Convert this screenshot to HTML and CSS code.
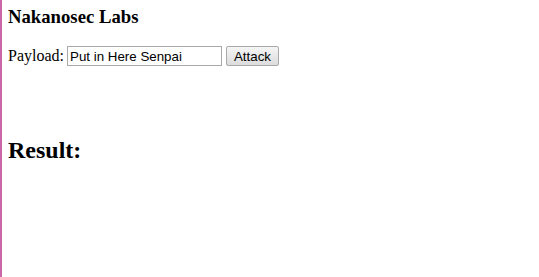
FILE: index.html
```html
<!DOCTYPE html>
<html>
<head>
<meta charset="utf-8">
<link rel="stylesheet" href="styles.css">
</head>
<body>
<h3 class="title">Nakanosec Labs</h3>
<form class="form">
  <label class="label">Payload:</label>
  <input class="field" type="text" value="Put in Here Senpai">
  <button class="btn" type="button">Attack</button>
</form>
<h2 class="result">Result:</h2>
</body>
</html>
```
FILE: styles.css
```css
html { border-left: 2px solid #cc66aa; min-height: 100%; }
body { margin: 6px 8px 8px 6px; font-family: "Liberation Serif", serif; font-size: 16px; }
.title { font-size: 18.72px; margin: 0 0 18px; }
.form { margin: 0; display: flex; align-items: center; }
.label { font-size: 16px; margin-right: 3px; }
.field { font-family: "Liberation Sans", sans-serif; font-size: 13.33px; width: 149px; border: 1px solid #a9a9a9; padding: 1px 2px; margin: 0; height: 16px; }
.btn { font-family: "Liberation Sans", sans-serif; font-size: 13.33px; margin: 0 0 0 4px; width: 53px; padding: 1px 0; border: 1px solid #a9a9a9; border-radius: 2px; background: linear-gradient(#f5f5f5, #dcdcdc); height: 20px; }
.result { font-size: 24px; margin: 71px 0 0; }
```
